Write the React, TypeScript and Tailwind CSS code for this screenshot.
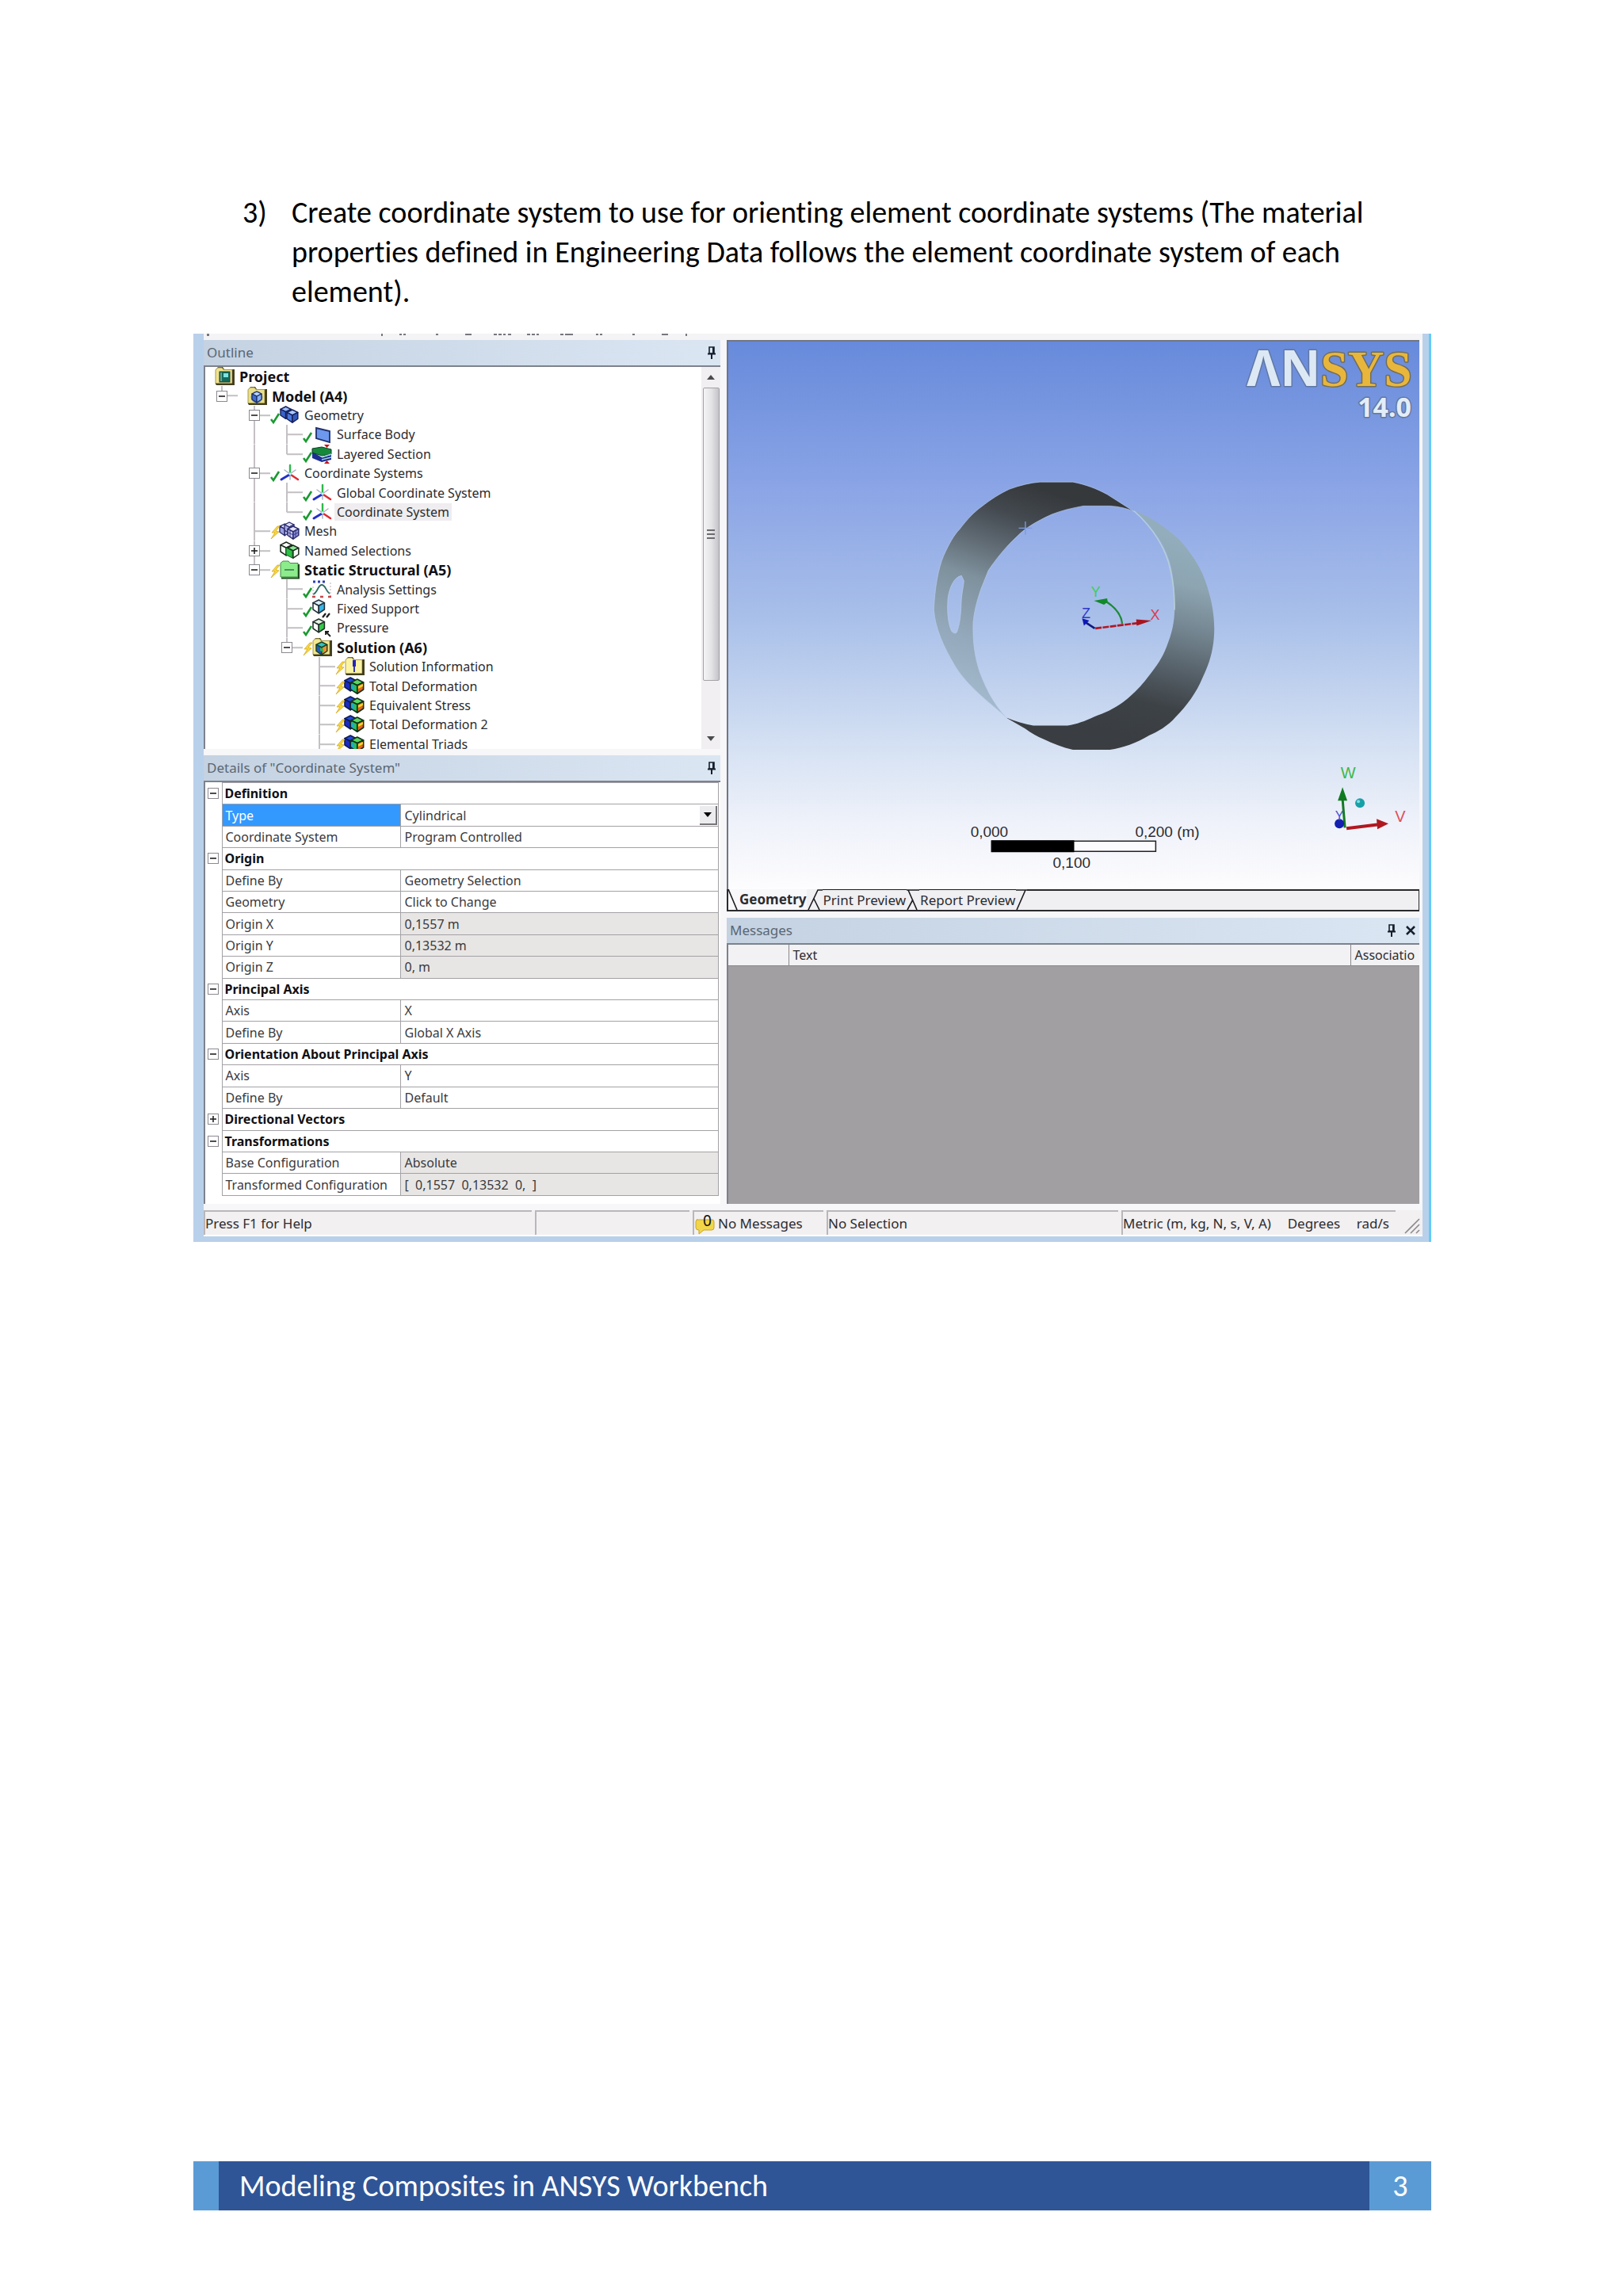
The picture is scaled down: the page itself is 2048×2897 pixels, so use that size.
import type { ReactNode } from "react";

const UI = "font-['Noto_Sans','Open_Sans',sans-serif]";

type Kind =
  | "project" | "model" | "geometry" | "surface" | "layers" | "axes" | "mesh" | "named"
  | "static" | "settings" | "support" | "pressure" | "solution" | "info" | "result";
type Status = "ok" | "bolt" | null;

interface TreeNode {
  label: string;
  kind: Kind;
  status: Status;
  guides: string;
  box?: "-" | "+";
  bold?: boolean;
  selected?: boolean;
}

const TREE: TreeNode[] = [
  { label: "Project", kind: "project", status: null, guides: "", bold: true },
  { label: "Model (A4)", kind: "model", status: null, guides: "L", box: "-", bold: true },
  { label: "Geometry", kind: "geometry", status: "ok", guides: " +", box: "-" },
  { label: "Surface Body", kind: "surface", status: "ok", guides: " |+" },
  { label: "Layered Section", kind: "layers", status: "ok", guides: " |L" },
  { label: "Coordinate Systems", kind: "axes", status: "ok", guides: " +", box: "-" },
  { label: "Global Coordinate System", kind: "axes", status: "ok", guides: " |+" },
  { label: "Coordinate System", kind: "axes", status: "ok", guides: " |L", selected: true },
  { label: "Mesh", kind: "mesh", status: "bolt", guides: " +" },
  { label: "Named Selections", kind: "named", status: null, guides: " +", box: "+" },
  { label: "Static Structural (A5)", kind: "static", status: "bolt", guides: " L", box: "-", bold: true },
  { label: "Analysis Settings", kind: "settings", status: "ok", guides: "  +" },
  { label: "Fixed Support", kind: "support", status: "ok", guides: "  +" },
  { label: "Pressure", kind: "pressure", status: "ok", guides: "  +" },
  { label: "Solution (A6)", kind: "solution", status: "bolt", guides: "  L", box: "-", bold: true },
  { label: "Solution Information", kind: "info", status: "bolt", guides: "   +" },
  { label: "Total Deformation", kind: "result", status: "bolt", guides: "   +" },
  { label: "Equivalent Stress", kind: "result", status: "bolt", guides: "   +" },
  { label: "Total Deformation 2", kind: "result", status: "bolt", guides: "   +" },
  { label: "Elemental Triads", kind: "result", status: "bolt", guides: "   +" },
];

type Detail =
  | { group: string; box: "-" | "+" }
  | { name: string; value: string; readOnly?: boolean; active?: boolean };

const DETAILS: Detail[] = [
  { group: "Definition", box: "-" },
  { name: "Type", value: "Cylindrical", active: true },
  { name: "Coordinate System", value: "Program Controlled" },
  { group: "Origin", box: "-" },
  { name: "Define By", value: "Geometry Selection" },
  { name: "Geometry", value: "Click to Change" },
  { name: "Origin X", value: "0,1557 m", readOnly: true },
  { name: "Origin Y", value: "0,13532 m", readOnly: true },
  { name: "Origin Z", value: "0, m", readOnly: true },
  { group: "Principal Axis", box: "-" },
  { name: "Axis", value: "X" },
  { name: "Define By", value: "Global X Axis" },
  { group: "Orientation About Principal Axis", box: "-" },
  { name: "Axis", value: "Y" },
  { name: "Define By", value: "Default" },
  { group: "Directional Vectors", box: "+" },
  { group: "Transformations", box: "-" },
  { name: "Base Configuration", value: "Absolute", readOnly: true },
  { name: "Transformed Configuration", value: "[  0,1557  0,13532  0,  ]", readOnly: true },
];

function Folder({ fill, children }: { fill: string; children?: ReactNode }) {
  return (
    <g>
      <path d="M14 4V23H37V3H24L22 0H16L14 3Z" fill="#4a4420" />
      <path d="M13 3.500 L16 1H21L23 3.500H34V21H13Z" fill={fill} stroke="#a89a48" strokeWidth="1" />
      <path d="M13 21.500H35V4" fill="none" stroke="#3f3a1c" strokeWidth="1.500" />
      {children}
    </g>
  );
}

function Cube({ x, y, s, left, right, top, line }: { x: number; y: number; s: number; left: string; right: string; top: string; line: string }) {
  return (
    <g transform={`translate(${x} ${y}) scale(${s})`} stroke={line} strokeWidth="1.300" strokeLinejoin="round">
      <path d="M0 3 6 0 12 3 6 6Z" fill={top} />
      <path d="M0 3 6 6V14L0 10Z" fill={left} />
      <path d="M12 3 6 6V14L12 10Z" fill={right} />
    </g>
  );
}

function Glyph({ kind }: { kind: Kind }) {
  switch (kind) {
    case "project":
      return (
        <Folder fill="#f0e290">
          <rect x="18" y="6" width="13" height="13" fill="#146a5c" stroke="#10403c" />
          <rect x="23" y="8" width="6" height="5" fill="#7fe3e0" />
          <path d="M20 7v11" stroke="#c8d8b0" />
        </Folder>
      );
    case "model":
      return (
        <Folder fill="#eadf8c">
          <circle cx="24" cy="13" r="7.500" fill="#3c5f9c" opacity=".55" />
          <Cube x={18} y={6} s={1} left="#3f6fd0" right="#88b0f4" top="#b8d4ff" line="#1c2f66" />
        </Folder>
      );
    case "geometry":
      return (
        <g>
          <Cube x={13} y={1} s={1.1} left="#3a62cc" right="#6c98ec" top="#9cc0ff" line="#141f5c" />
          <Cube x={21} y={5} s={1.15} left="#4b78dc" right="#3558b8" top="#a8c8ff" line="#141f5c" />
        </g>
      );
    case "surface":
      return <path d="M17 4 34 8V22L17 17Z" fill="#6d98ee" stroke="#1f2f6c" strokeWidth="1.800" />;
    case "layers":
      return (
        <g>
          <path d="M12 9V17L24 22 36 19V13L24 16Z" fill="#1c2f94" />
          <path d="M12 5 24 3 36 6V12L24 14 12 10Z" fill="#16883a" stroke="#0d3f26" />
          <path d="M24 16 36 12M24 19 36 16" stroke="#9fd0d8" strokeWidth="1.400" />
          <path d="M27 0H34L30.500 4ZM27 24H34L30.500 20Z" fill="#c4141a" />
        </g>
      );
    case "axes":
      return (
        <g strokeLinecap="round">
          <path d="M25 13 18 8M25 13 32 8M25 13V20" stroke="#a9b4c4" strokeWidth="1.500" />
          <path d="M25 13V2" stroke="#2cb84a" strokeWidth="2.400" />
          <path d="M24 14 14 20" stroke="#2230c8" strokeWidth="3" />
          <path d="M26 14 35 20" stroke="#dc2c34" strokeWidth="2.600" />
          <circle cx="25" cy="13" r="1.800" fill="#bff4ff" />
        </g>
      );
    case "mesh":
      return (
        <g>
          <Cube x={12} y={3} s={1.05} left="#9aa0e0" right="#c4c8f4" top="#dcdcfa" line="#2a2a6c" />
          <Cube x={18} y={1} s={1} left="#a8aee8" right="#c4c8f4" top="#dcdcfa" line="#2a2a6c" />
          <Cube x={22} y={6} s={1.15} left="#c9ccf6" right="#8c92d8" top="#e4e4fc" line="#2a2a6c" />
          <path d="M25 10v9M32 10v9M23 14l6 3 6-3" stroke="#3a3a8c" fill="none" />
        </g>
      );
    case "named":
      return (
        <g>
          <Cube x={13} y={1} s={1.2} left="#ffffff" right="#e8efe8" top="#ffffff" line="#1c2a1c" />
          <Cube x={22} y={5} s={1.15} left="#34c84a" right="#f4f8f4" top="#8be89a" line="#1c2a1c" />
          <path d="M20 8 28 12V21L20 17Z" fill="#2cc044" stroke="#145c20" />
        </g>
      );
    case "static":
      return (
        <g>
          <path d="M13 3.500 L16 1H23L25 3.500H35V21H13Z" fill="#8cec8c" stroke="#3f8c3f" />
          <path d="M14 22.500H36V5" fill="none" stroke="#1f4a1f" strokeWidth="2" />
          <path d="M18 12H30" stroke="#3c7c4c" strokeWidth="1.600" />
        </g>
      );
    case "settings":
      return (
        <g>
          <path d="M13 2h3M19 2h3M25 2h3" stroke="#2a3cc4" strokeWidth="3" />
          <path d="M13 18C19 16 19 6 24 6S29 14 34 17" fill="none" stroke="#2f6c64" strokeWidth="1.800" />
          <path d="M35 3V20M13 8V18" stroke="#b4b4b4" strokeDasharray="2 2" />
          <path d="M12 21h4M22 21h4M32 21h4" stroke="#c4484c" strokeWidth="2.500" />
        </g>
      );
    case "support":
      return (
        <g>
          <Cube x={13} y={1} s={1.2} left="#ffffff" right="#39b4e4" top="#d8f0fa" line="#22303c" />
          <path d="M25 23 29 18M30 23 34 18" stroke="#1c1c1c" strokeWidth="2.200" />
        </g>
      );
    case "pressure":
      return (
        <g>
          <Cube x={13} y={1} s={1.2} left="#ffffff" right="#34c84a" top="#e4f4e4" line="#22302a" />
          <path d="M29 16V21M28 17H33M29 17 35 23" stroke="#1c1c1c" strokeWidth="1.800" />
        </g>
      );
    case "solution":
      return (
        <Folder fill="#f2e690">
          <Cube x={17} y={5} s={1.15} left="#2058c8" right="#f09030" top="#34c0c0" line="#1c4020" />
          <path d="M22 12 26 14V18L22 16Z" fill="#30b84c" />
        </Folder>
      );
    case "info":
      return (
        <Folder fill="#fbf3a4">
          <path d="M24 4V12" stroke="#2424c4" strokeWidth="4" />
          <path d="M24 12V19" stroke="#2424a4" strokeWidth="1.800" />
        </Folder>
      );
    case "result":
      return (
        <g>
          <Cube x={12} y={1} s={1.2} left="#1a2cc0" right="#2a6ce4" top="#2448d8" line="#0c1a50" />
          <Cube x={20} y={3} s={1.3} left="#2cc050" right="#e86420" top="#58d860" line="#14321c" />
          <path d="M20 9 24 11V18L20 15Z" fill="#20a8d0" />
          <path d="M29 12 35 9V12L29 15Z" fill="#f0d828" />
        </g>
      );
  }
}

function NodeIcon({ kind, status }: { kind: Kind; status: Status }) {
  return (
    <svg viewBox="0 0 40 24" className="h-6 w-10 shrink-0" aria-hidden="true">
      <Glyph kind={kind} />
      {status === "ok" && <path d="M1 17 4 21 11 10" fill="none" stroke="#1a9a30" strokeWidth="2.600" />}
      {status === "bolt" && <path d="M9 6 2 14 6 14 1 22 11 13 7 12 12 6Z" fill="#f6d83c" stroke="#d8a820" strokeWidth=".8" />}
    </svg>
  );
}

function Guide({ mark }: { mark: string }) {
  return (
    <svg viewBox="0 0 41 24" preserveAspectRatio="none" className="absolute inset-0 h-full w-full" aria-hidden="true">
      <g stroke="#c4c1c4" strokeWidth="2" fill="none">
        {(mark === "|" || mark === "+") && <path d="M21 0V24" />}
        {mark === "L" && <path d="M21 0V12" />}
        {(mark === "+" || mark === "L") && <path d="M21 12H41" />}
      </g>
    </svg>
  );
}

function Expander({ sign, label }: { sign: "-" | "+"; label: string }) {
  return (
    <button type="button" aria-label={label} className="relative flex size-[14px] items-center justify-center border border-[#8c8890] bg-white">
      <svg viewBox="0 0 8 8" className="size-2" stroke="#222" strokeWidth="1.600" aria-hidden="true">
        <path d="M0 4H8" />
        {sign === "+" && <path d="M4 0V8" />}
      </svg>
    </button>
  );
}

function Pin() {
  return (
    <button type="button" aria-label="Auto hide">
      <svg viewBox="0 0 12 16" className="h-4 w-3" fill="none" stroke="#16202c" strokeWidth="1.600" aria-hidden="true">
        <path d="M3 1H9V9H3Z" />
        <path d="M8 1V9M1 9.500H11M6 10V16" strokeWidth="2" />
      </svg>
    </button>
  );
}

function PanelHeader({ title, close }: { title: string; close?: boolean }) {
  return (
    <div className="flex h-8 items-center justify-between bg-linear-to-r from-[#c4d2e2] to-[#dbe6f3] pr-[5px] pl-1 text-[17px] text-[#5a6672]">
      <h2>{title}</h2>
      <div className="flex items-center gap-3">
        <Pin />
        {close && (
          <button type="button" aria-label="Close">
            <svg viewBox="0 0 12 12" className="size-3" stroke="#16202c" strokeWidth="2.600" aria-hidden="true">
              <path d="M1 1 11 11M11 1 1 11" />
            </svg>
          </button>
        )}
      </div>
    </div>
  );
}

function Outline() {
  return (
    <section>
      <PanelHeader title="Outline" />
      <div className="flex h-[484px] overflow-hidden border-t-2 border-l-2 border-[#7d828c] bg-white">
        <ul className="grid h-[488px] flex-1 auto-rows-fr text-[16px] text-[#2c2c30]">
          {TREE.map((n, i) => (
            <li key={i} className="flex items-center">
              {n.guides.split("").map((g, k) => (
                <span key={k} className="relative flex w-[41px] items-center justify-center self-stretch">
                  <Guide mark={g} />
                  {n.box && k === n.guides.length - 1 && <Expander sign={n.box} label={`Toggle ${n.label}`} />}
                </span>
              ))}
              <NodeIcon kind={n.kind} status={n.status} />
              <span className={`${n.bold ? "text-[18px] font-bold text-[#101014]" : ""} ${n.selected ? "bg-[#efedef]" : ""} px-[3px] leading-[22px]`}>
                {n.label}
              </span>
            </li>
          ))}
        </ul>
        <div className="flex w-6 flex-col items-center bg-[#f1eff1] py-2">
          <svg viewBox="0 0 10 10" className="size-[10px]" fill="#4a4a4e" aria-hidden="true"><path d="M0 8 5 2 10 8Z" /></svg>
          <div className="mt-2 flex h-[370px] w-[21px] items-center justify-center rounded-xs border border-[#a4a2a6] bg-linear-to-r from-[#f4f3f5] via-[#e4e3e6] to-[#c4c3c8]">
            <svg viewBox="0 0 10 12" className="h-3 w-[10px]" stroke="#6c6c70" strokeWidth="2" aria-hidden="true"><path d="M0 1H10M0 6H10M0 11H10" /></svg>
          </div>
          <svg viewBox="0 0 10 10" className="mt-auto size-[10px]" fill="#4a4a4e" aria-hidden="true"><path d="M0 2 5 8 10 2Z" /></svg>
        </div>
      </div>
    </section>
  );
}

function Details() {
  return (
    <section className="flex flex-1 flex-col">
      <PanelHeader title={'Details of "Coordinate System"'} />
      <div className="flex-1 border-t-2 border-l-2 border-[#7d828c] bg-white pr-[2px] pb-[10px]">
        <table className="h-[522px] w-full table-fixed border-collapse text-[16px] leading-5 text-[#3a3a3e]">
          <colgroup>
            <col className="w-[21px]" />
            <col className="w-[225px]" />
            <col />
          </colgroup>
          <tbody>
            {DETAILS.map((d, i) =>
              "group" in d ? (
                <tr key={i}>
                  <td className="p-0">
                    <div className="flex justify-center"><Expander sign={d.box} label={`Toggle ${d.group}`} /></div>
                  </td>
                  <th colSpan={2} scope="rowgroup" className="border border-[#a3a1a5] py-0 pl-[3px] text-left font-bold text-[#101014]">{d.group}</th>
                </tr>
              ) : (
                <tr key={i}>
                  <td className="p-0" />
                  <th scope="row" className={`${d.active ? "bg-[#3399ff] text-white" : ""} border border-[#a3a1a5] py-0 pl-1 text-left font-normal whitespace-nowrap`}>
                    {d.active ? <label htmlFor="type">{d.name}</label> : d.name}
                  </th>
                  <td className={`${d.readOnly ? "bg-[#e8e6e4]" : ""} border border-[#a3a1a5] py-0 pr-0 pl-[5px] whitespace-pre`}>
                    {d.active ? (
                      <div className="relative flex items-center">
                        <select id="type" defaultValue="Cylindrical" className="w-full appearance-none bg-transparent leading-5 outline-none">
                          <option>Cylindrical</option>
                          <option>Cartesian</option>
                        </select>
                        <span className="pointer-events-none absolute right-px flex h-6 w-[22px] items-center justify-center border-r-2 border-b-2 border-[#77757a] bg-[#ecebed]">
                          <svg viewBox="0 0 12 8" className="h-2 w-3" aria-hidden="true"><path d="M1 1H11L6 7Z" fill="#000" /></svg>
                        </span>
                      </div>
                    ) : d.value}
                  </td>
                </tr>
              )
            )}
          </tbody>
        </table>
      </div>
    </section>
  );
}

function Viewport() {
  return (
    <svg viewBox="0 0 873 692" className="block w-full" role="img" aria-label="Cylindrical shell model">
      <defs>
        <linearGradient id="sky" x1="0" y1="0" x2="0" y2="1">
          <stop offset="0" stopColor="#678adb" />
          <stop offset=".27" stopColor="#8ba5e6" />
          <stop offset=".5" stopColor="#a8bfe9" />
          <stop offset=".74" stopColor="#d5e1f3" />
          <stop offset=".88" stopColor="#eff2fa" />
          <stop offset="1" stopColor="#fdfcfe" />
        </linearGradient>
        <linearGradient id="inner" gradientUnits="userSpaceOnUse" x1="480" y1="110" x2="200" y2="940">
          <stop offset="0" stopColor="#36393c" />
          <stop offset=".14" stopColor="#43494f" />
          <stop offset=".3" stopColor="#616c75" />
          <stop offset=".45" stopColor="#7e919d" />
          <stop offset=".7" stopColor="#93a8ba" />
          <stop offset="1" stopColor="#a6bcd0" />
        </linearGradient>
        <linearGradient id="outer" gradientUnits="userSpaceOnUse" x1="1040" y1="300" x2="860" y2="1060">
          <stop offset="0" stopColor="#93adbd" />
          <stop offset=".22" stopColor="#8da5b1" />
          <stop offset=".45" stopColor="#71828d" />
          <stop offset=".65" stopColor="#535d65" />
          <stop offset=".82" stopColor="#3d4246" />
          <stop offset="1" stopColor="#3a3e42" />
        </linearGradient>
      </defs>
      <rect width="873" height="692" fill="url(#sky)" />

      <g transform="translate(232 149) scale(.3333)">
        <path
          d="M355 975C300 925 215 865 165 785C120 710 88 640 83 570C86 490 100 410 120 365C140 320 160 285 180 265C210 225 240 195 262 180C300 150 335 128 370 112C410 97 450 88 485 85H610C660 95 700 110 740 132L842 197C815 185 785 178 750 176H650C605 184 565 194 530 208C470 235 430 260 400 290C350 335 310 390 290 420L262 490C245 540 235 580 232 620C230 700 240 750 255 800C280 870 310 925 355 975ZM188 440C160 445 145 480 137 520C132 570 136 620 150 650C158 660 166 660 170 655C180 630 186 590 187 540C188 510 196 480 197 460Z"
          fill="url(#inner)" fillRule="evenodd" stroke="#b9cdeb" strokeWidth="2"
        />
        <path
          d="M848 196C900 215 960 255 1015 305C1050 345 1090 400 1110 455C1130 510 1145 570 1146 640C1146 710 1130 770 1100 830C1080 880 1040 935 1000 975C970 1010 930 1032 900 1045C850 1075 800 1092 750 1100H610C570 1090 535 1077 500 1060C475 1050 450 1035 430 1020L355 977C390 992 425 1002 460 1008H590C625 1002 655 992 690 975C730 962 765 945 800 920C850 880 870 855 890 830C930 780 950 750 965 710C985 660 995 620 996 560C996 510 992 460 985 420C970 340 920 260 848 196Z"
          fill="url(#outer)"
        />
        <path d="M842 195C915 260 965 340 980 420C992 470 996 510 995 570" fill="none" stroke="#b6cdd6" strokeWidth="5" />
        <path d="M430 235V285M405 260H455" stroke="#7d9be0" strokeWidth="4" />
        <path d="M695 640 870 618" stroke="#b01824" strokeWidth="8" strokeDasharray="24 4" />
        <path d="M850 606 908 610 852 630Z" fill="#a8141e" />
        <path d="M797 622C793 585 770 560 738 540" fill="none" stroke="#1d8a38" strokeWidth="7" />
        <path d="M690 535 740 526 742 540 728 550Z" fill="#118a2a" />
        <path d="M693 640 655 615" stroke="#101a80" strokeWidth="8" />
        <path d="M645 602 672 610 652 630Z" fill="#0c18b4" />
      </g>
      <g fontFamily="Liberation Sans, sans-serif" textAnchor="middle" fontSize="18">
        <text x="452" y="349" fill="#2f38c8">Z</text>
        <text x="464" y="322" fill="#3ccf58">Y</text>
        <text x="539" y="351" fill="#dc3c4c">X</text>
      </g>

      <g paintOrder="stroke" strokeWidth="3" strokeLinejoin="round" fontWeight="700">
        <text x="655" y="56" fontFamily="Noto Sans, sans-serif" fontSize="63" fill="#dce8f4" stroke="#6077a4">ΛN</text>
        <text x="748" y="56" fontFamily="Liberation Serif, serif" fontSize="63" fill="#e9b63c" stroke="#716d58">SYS</text>
        <text x="863" y="95" textAnchor="end" fontFamily="Noto Sans, sans-serif" fontSize="34" fill="#e3edf8" stroke="#62789f">14.0</text>
      </g>

      <g fontFamily="Liberation Sans, sans-serif" fontSize="19" fill="#2c2c30">
        <text x="306" y="626">0,000</text>
        <text x="514" y="626">0,200 (m)</text>
        <text x="410" y="665">0,100</text>
      </g>
      <rect x="333" y="631" width="207" height="13" fill="#fbfbfd" stroke="#222" strokeWidth="1.500" />
      <rect x="332" y="630" width="105" height="15" fill="#000" />

      <g>
        <path d="M779 614 776 578" stroke="#157a24" strokeWidth="3" />
        <path d="M776 563 782 580H770Z" fill="#107a20" />
        <path d="M781 615 822 610" stroke="#b01820" strokeWidth="4" />
        <path d="M819 603 834 609 820 616Z" fill="#b01820" />
        <circle cx="772" cy="609" r="6" fill="#1420b0" />
        <circle cx="798" cy="583" r="6" fill="#18a0a8" />
        <circle cx="796" cy="581" r="2" fill="#7fe0e4" />
      </g>
      <g fontFamily="Liberation Sans, sans-serif" fontSize="20" textAnchor="middle">
        <text x="783" y="552" fill="#3cb848">W</text>
        <text x="849" y="607" fill="#e0505c">V</text>
        <text x="772" y="605" fontSize="16" fill="#4450d8">Y</text>
      </g>
    </svg>
  );
}

function TabBar() {
  const tab = "border-t border-t-[#1c1c20] h-full px-px";
  return (
    <div role="tablist" className="flex h-[28px] items-stretch border-r border-b-2 border-[#2a2a2e] bg-[#f0eff1] text-[17px] text-[#2c2c30]">
      <div className="flex bg-[#f8f7fa]">
        <svg viewBox="0 0 14 26" className="h-full w-[14px]" fill="none" stroke="#1c1c20" strokeWidth="1.600" aria-hidden="true"><path d="M0 0 11 26" /></svg>
        <button role="tab" aria-selected="true" className="font-bold">Geometry</button>
      </div>
      <svg viewBox="0 0 20 26" className="h-full w-5" fill="none" stroke="#1c1c20" strokeWidth="1.600" aria-hidden="true"><path d="M2 26 14 1H20M9 12 16 26" /></svg>
      <button role="tab" aria-selected="false" className={tab}>Print Preview</button>
      <svg viewBox="0 0 16 26" className="h-full w-4" fill="none" stroke="#1c1c20" strokeWidth="1.600" aria-hidden="true"><path d="M0 1H16M2 1 13 26M1 26 8 13" /></svg>
      <button role="tab" aria-selected="false" className={tab}>Report Preview</button>
      <svg viewBox="0 0 14 26" className="h-full w-[14px]" fill="none" stroke="#1c1c20" strokeWidth="1.600" aria-hidden="true"><path d="M0 1H14M1 26 12 1" /></svg>
      <div className="flex-1 border-t-2 border-[#2a2a2e]" />
    </div>
  );
}

function Messages() {
  return (
    <section className="flex flex-1 flex-col">
      <PanelHeader title="Messages" close />
      <div className="flex-1 overflow-hidden border-t-2 border-l-2 border-[#7d828c] bg-[#a19fa1]">
        <table className="w-full table-fixed border-collapse bg-[#f2f1f3] text-[16px] leading-[26px] text-[#2c2c30]">
          <thead>
            <tr className="border-b border-[#8a888c]">
              <th scope="col" aria-label="Kind" className="w-[76px] border-r border-[#8a888c]" />
              <th scope="col" className="border-r border-[#8a888c] pl-[5px] text-left font-normal">Text</th>
              <th scope="col" className="w-[87px] pl-[5px] text-left font-normal">Associatio</th>
            </tr>
          </thead>
        </table>
      </div>
    </section>
  );
}

function StatusBar() {
  const cell = "flex items-center border-t-2 border-l-2 border-[#b9b7ba]";
  return (
    <footer className="flex h-[33px] gap-1 border-b-2 border-white bg-[#f2f0f1] text-[17px] text-[#2c2c30]">
      <div className={`${cell} w-[414px]`}>Press F1 for Help</div>
      <div className={`${cell} w-[195px]`} />
      <div className={`${cell} w-[165px] gap-1`}>
        <svg viewBox="0 0 26 28" className="h-7 w-[26px]" aria-hidden="true">
          <path d="M3 9H23Q25 9 25 12V19Q25 22 22 22H12L6 27V22Q2 22 2 19V12Q2 9 4 9Z" fill="#f2d648" stroke="#c9a428" />
          <text x="11" y="17" fontFamily="Noto Sans, sans-serif" fontSize="19" fill="#111">0</text>
        </svg>
        No Messages
      </div>
      <div className={`${cell} flex-1`}>No Selection</div>
      <div className={`${cell} w-[346px] justify-between pr-2`}>
        <span>Metric (m, kg, N, s, V, A)</span>
        <span>Degrees</span>
        <span>rad/s</span>
      </div>
      <svg viewBox="0 0 30 31" className="h-full w-[30px]" stroke="#8c8a8e" strokeWidth="1.600" aria-hidden="true">
        <path d="M8 29 26 11M15 29 26 18M22 29 26 25" />
      </svg>
    </footer>
  );
}

export default function App() {
  return (
    <div className="flex min-h-screen flex-col bg-white pt-[243px] pr-[242px] pb-[108px] pl-[244px]">
      <main>
        <ol start={3} className="pr-[70px] pl-[62px] font-['Carlito','Lato',sans-serif] text-[38px] leading-[50px] text-black [font-variant-ligatures:none]">
          <li className="flex">
            <span className="w-[62px] shrink-0">3)</span>
            <p>
              Create coordinate system to use for orienting element coordinate systems (The material properties
              defined in Engineering Data follows the element coordinate system of each element).
            </p>
          </li>
        </ol>

        <div className={`${UI} mt-[28px] border-r-[3px] border-[#62cbf7] bg-[#f7f6f8]`}>
          <div className="border-r-8 border-b-[7px] border-l-[13px] border-[#b9d0ea]">
            <div className="h-2 overflow-hidden bg-[#f4f3f5]">
              <svg viewBox="0 0 640 8" className="h-2 w-[640px]" fill="#77777c" aria-hidden="true">
                <path d="M4 0h3v3h-3zM224 0h2v3h-2zM247 0h3v2h-3zM252 0h3v2h-3zM293 0h3v2h-3zM330 0h8v2h-8zM366 0h4v2h-4zM372 0h4v2h-4zM378 0h3v2h-3zM384 0h4v2h-4zM408 0h4v2h-4zM414 0h4v2h-4zM420 0h3v2h-3zM450 0h4v2h-4zM456 0h10v2h-10zM495 0h3v2h-3zM500 0h3v2h-3zM541 0h3v2h-3zM578 0h8v2h-8zM608 0h2v3h-2z" />
              </svg>
            </div>
            <div className="flex gap-2 pr-1 pb-2">
              <div className="flex w-[652px] shrink-0 flex-col gap-2">
                <Outline />
                <Details />
              </div>
              <div className="flex min-w-0 flex-1 flex-col">
                <div className="border-t-2 border-l-2 border-[#6f7684]"><Viewport /></div>
                <div className="mb-2 border-l-2 border-[#2a2a2e]"><TabBar /></div>
                <Messages />
              </div>
            </div>
            <StatusBar />
          </div>
        </div>
      </main>

      <footer className="mt-auto flex h-[62px] items-stretch bg-[#2f5597] font-['Carlito','Lato',sans-serif] text-[38px] text-white [font-variant-ligatures:none]">
        <div className="w-8 bg-[#5b9bd5]" />
        <div className="flex flex-1 items-center pl-[26px]">Modeling Composites in ANSYS Workbench</div>
        <div className="flex w-[78px] items-center justify-center bg-[#5b9bd5]">3</div>
      </footer>
    </div>
  );
}
